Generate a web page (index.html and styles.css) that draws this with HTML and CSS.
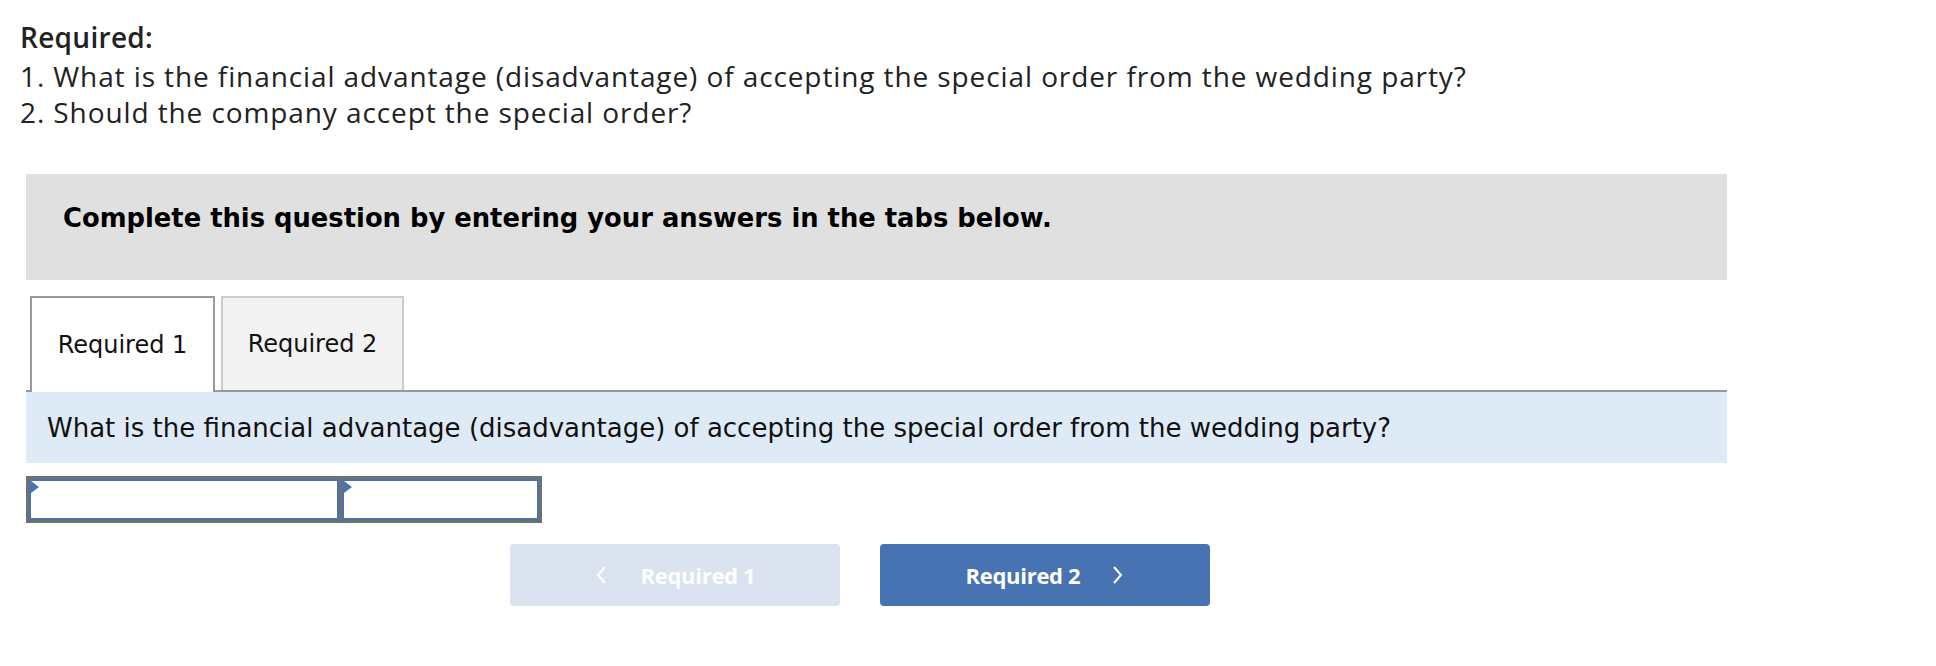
FILE: index.html
```html
<!DOCTYPE html>
<html>
<head>
<meta charset="utf-8">
<link rel="stylesheet" href="styles.css">
</head>
<body>
<div class="header">
  <div class="req-title">Required:</div>
  <div class="req-line">1. What is the financial advantage (disadvantage) of accepting the special order from the wedding party?</div>
  <div class="req-line">2. Should the company accept the special order?</div>
</div>
<div class="work">
  <div class="instructions">Complete this question by entering your answers in the tabs below.</div>
  <div class="tabs">
    <div class="tab tab-active">Required 1</div>
    <div class="tab tab-idle">Required 2</div>
  </div>
  <div class="question">What is the financial advantage (disadvantage) of accepting the special order from the wedding party?</div>
  <div class="answer-row">
    <div class="cell cell-wide"><span class="flag"></span></div>
    <div class="cell cell-narrow"><span class="flag"></span></div>
  </div>
  <div class="nav">
    <div class="btn btn-prev">
      <svg class="chev" width="12" height="20" viewBox="0 0 12 20"><path d="M10 2 L3 10 L10 18" fill="none" stroke="#ffffff" stroke-width="2"/></svg>
      <span class="btn-label">Required 1</span>
    </div>
    <div class="btn btn-next">
      <span class="btn-label">Required 2</span>
      <svg class="chev" width="12" height="20" viewBox="0 0 12 20"><path d="M2 2 L9 10 L2 18" fill="none" stroke="#ffffff" stroke-width="2"/></svg>
    </div>
  </div>
</div>
</body>
</html>
```
FILE: styles.css
```css
html, body {
  margin: 0;
  padding: 0;
  background: #ffffff;
}
.header {
  padding: 19px 0 0 20px;
  font-family: "Open Sans", "Liberation Sans", sans-serif;
  font-size: 28px;
  letter-spacing: 0.9px;
  line-height: 36px;
  color: #222222;
}
.req-title {
  font-weight: 600;
  letter-spacing: 0.3px;
  margin-bottom: 3px;
}
.work {
  margin: 44px 0 0 26px;
  width: 1701px;
}
.instructions {
  box-sizing: border-box;
  height: 106px;
  background: #e0e0e0;
  padding: 27px 0 0 37px;
  font-family: "DejaVu Sans", Verdana, sans-serif;
  font-weight: 700;
  font-size: 25.8px;
  line-height: 34px;
  color: #000000;
}
.tabs {
  display: flex;
  align-items: flex-start;
  gap: 6px;
  margin-top: 16px;
  padding-left: 4px;
  height: 94px;
  border-bottom: 2px solid #999999;
}
.tab {
  box-sizing: border-box;
  display: flex;
  align-items: center;
  justify-content: center;
  font-family: "DejaVu Sans", Verdana, sans-serif;
  font-size: 24px;
  color: #111111;
}
.tab-active {
  width: 185px;
  height: 96px;
  border: 2px solid #999999;
  border-bottom: none;
  background: #ffffff;
  position: relative;
  z-index: 1;
}
.tab-idle {
  width: 183px;
  height: 94px;
  border: 2px solid #cccccc;
  border-bottom: none;
  background: #f2f2f2;
}
.question {
  box-sizing: border-box;
  height: 71px;
  background: #deebf7;
  display: flex;
  align-items: center;
  padding-left: 21px;
  font-family: "DejaVu Sans", Verdana, sans-serif;
  font-size: 26px;
  color: #111111;
}
.answer-row {
  box-sizing: border-box;
  display: flex;
  gap: 3px;
  width: 516px;
  height: 47px;
  margin-top: 13px;
  border: 3px solid #707070;
  background: #707070;
}
.cell {
  box-sizing: border-box;
  position: relative;
  height: 100%;
  border: 2px solid #4a73b1;
  background: #ffffff;
}
.cell-wide {
  width: 310px;
}
.cell-narrow {
  flex: 1;
}
.flag {
  position: absolute;
  left: 0;
  top: 0;
  width: 0;
  height: 0;
  border-top: 6px solid transparent;
  border-bottom: 6px solid transparent;
  border-left: 8px solid #4a73b1;
}
.nav {
  display: flex;
  gap: 40px;
  margin: 21px 0 0 484px;
}
.btn {
  box-sizing: border-box;
  width: 330px;
  height: 62px;
  border-radius: 4px;
  display: flex;
  align-items: center;
  justify-content: center;
  gap: 32px;
  font-family: "Open Sans", "Liberation Sans", sans-serif;
  font-weight: 700;
  font-size: 22px;
  letter-spacing: -0.3px;
  color: #ffffff;
}
.btn-prev {
  background: #dae3ef;
  gap: 34px;
}
.btn-next {
  background: #4873b3;
}
.chev {
  display: block;
}
```
